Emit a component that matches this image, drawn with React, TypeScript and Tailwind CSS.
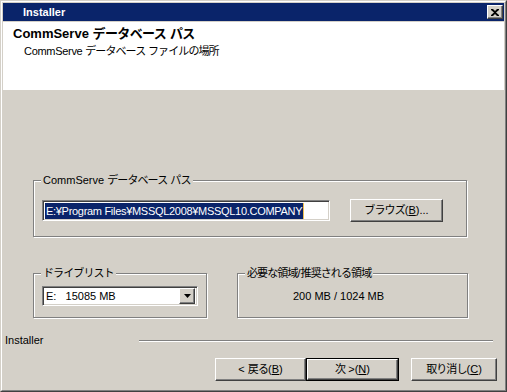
import React from "react";

const raised =
  "border border-t-white border-l-white border-r-[#404040] border-b-[#404040] shadow-[inset_-1px_-1px_0_#808080] bg-[#d4d0c8]";
const sunken =
  "border border-t-[#808080] border-l-[#808080] border-r-white border-b-white shadow-[inset_1px_1px_0_#404040,inset_-1px_-1px_0_#d4d0c8] bg-white";
const etched =
  "border border-[#808080] shadow-[inset_1px_1px_0_#fff,1px_1px_0_#fff]";

// Japanese runs are set tighter, closer to the narrow UI font of the original
function J({ children }: { children: React.ReactNode }) {
  return <span className="tracking-[-0.9px]">{children}</span>;
}

function GroupBox({
  label,
  className = "",
  children,
}: {
  label: React.ReactNode;
  className?: string;
  children?: React.ReactNode;
}) {
  return (
    <div className={`relative ${etched} ${className}`}>
      <span className="absolute -top-[7px] left-[7px] bg-[#d4d0c8] px-[2px] leading-[13px] whitespace-pre">
        {label}
      </span>
      {children}
    </div>
  );
}

function Button({
  children,
  width,
  isDefault = false,
}: {
  children: React.ReactNode;
  width: string;
  isDefault?: boolean;
}) {
  const face = (
    <div className={`${raised} ${width} h-full flex items-center justify-center whitespace-pre`}>
      {children}
    </div>
  );
  if (!isDefault) return <div className="h-[23px]">{face}</div>;
  return <div className="h-[23px] border border-black">{face}</div>;
}

export default function App() {
  return (
    <div className="w-[507px] h-[392px] border border-t-[#d4d0c8] border-l-[#d4d0c8] border-r-[#404040] border-b-[#404040] font-['Liberation_Sans','Noto_Sans_CJK_JP',sans-serif] text-[11px] text-black">
      <div className="h-full border border-t-white border-l-white border-r-[#808080] border-b-[#808080] bg-[#d4d0c8] p-[1px] flex flex-col">
        {/* title bar */}
        <div className="h-[18px] bg-[#0a246a] flex items-center pl-[20px] pr-[1px]">
          <span className="text-white font-bold text-[11px] leading-none">Installer</span>
          <div className={`ml-auto w-[16px] h-[14px] ${raised} flex items-center justify-center`}>
            <svg width="8" height="7" viewBox="0 0 8 7">
              <path d="M0 0h2l2 2 2-2h2v1L5 3.5 8 6v1H6L4 5 2 7H0V6l3-2.5L0 1z" fill="#000" />
            </svg>
          </div>
        </div>

        {/* header */}
        <div className="mt-[1px] h-[68px] bg-white pt-[4px]">
          <div className="pl-[10px] text-[13px] font-bold leading-[16px] whitespace-pre">
            CommServe <span className="tracking-[-0.6px]">データベース</span> <span className="tracking-[-0.6px]">パス</span>
          </div>
          <div className="pl-[21px] mt-[2px] leading-[14px] whitespace-pre tracking-[-0.3px]">
            CommServe <J>データベース</J> <J>ファイルの場所</J>
          </div>
        </div>

        {/* body */}
        <div className="flex-1 flex flex-col">
          <GroupBox
            label={
              <>
                CommServe <J>データベース</J> <J>パス</J>
              </>
            }
            className="mt-[90px] ml-[30px] w-[434px] h-[57px]"
          >
            <div className="flex items-center pl-[8px] pt-[18px]">
              <div className={`${sunken} w-[288px] h-[21px] flex items-center pl-[2px]`}>
                <span className="bg-[#0a246a] text-white leading-[16px] px-[1px] whitespace-nowrap tracking-[-0.3px]">
                  E:¥Program Files¥MSSQL2008¥MSSQL10.COMPANY
                </span>
                <span className="w-[1px] h-[16px] bg-[#f0c050]" />
              </div>
              <div className="ml-[20px]">
                <Button width="w-[93px]">
                  <J>ブラウズ</J>(<span className="underline">B</span>)...
                </Button>
              </div>
            </div>
          </GroupBox>

          <div className="flex mt-[36px] ml-[30px]">
            <GroupBox label={<J>ドライブリスト</J>} className="w-[174px] h-[45px]">
              <div className="pl-[8px] pt-[12px]">
                <div className={`${sunken} w-[156px] h-[20px] flex items-center pl-[3px] pr-[2px]`}>
                  <span className="whitespace-pre">E:   15085 MB</span>
                  <div className={`ml-auto w-[16px] h-[16px] ${raised} flex items-center justify-center`}>
                    <svg width="7" height="4" viewBox="0 0 7 4">
                      <path d="M0 0h7L3.5 4z" fill="#000" />
                    </svg>
                  </div>
                </div>
              </div>
            </GroupBox>
            <GroupBox
              label={
                <>
                  <J>必要な領域</J>/<J>推奨される領域</J>
                </>
              }
              className="ml-[30px] w-[231px] h-[45px]"
            >
              <div className="h-full flex items-center pl-[55px] pt-[1px]">200 MB / 1024 MB</div>
            </GroupBox>
          </div>

          <div className="flex items-center mt-[16px] h-[13px] pl-[2px] pr-[11px]">
            <span className="leading-[13px]">Installer</span>
            <div className="ml-auto w-[354px] h-[2px] border-t border-t-[#808080] border-b border-b-white" />
          </div>

          <div className="flex justify-end mt-[11px] pr-[7px]">
            <Button width="w-[91px]">
              {"< "}
              <J>戻る</J>(<span className="underline">B</span>)
            </Button>
            <Button width="w-[91px]" isDefault>
              <J>次</J>
              {" >"}(<span className="underline">N</span>)
            </Button>
            <div className="ml-[12px]">
              <Button width="w-[86px]">
                <J>取り消し</J>(<span className="underline">C</span>)
              </Button>
            </div>
          </div>
        </div>
      </div>
    </div>
  );
}
